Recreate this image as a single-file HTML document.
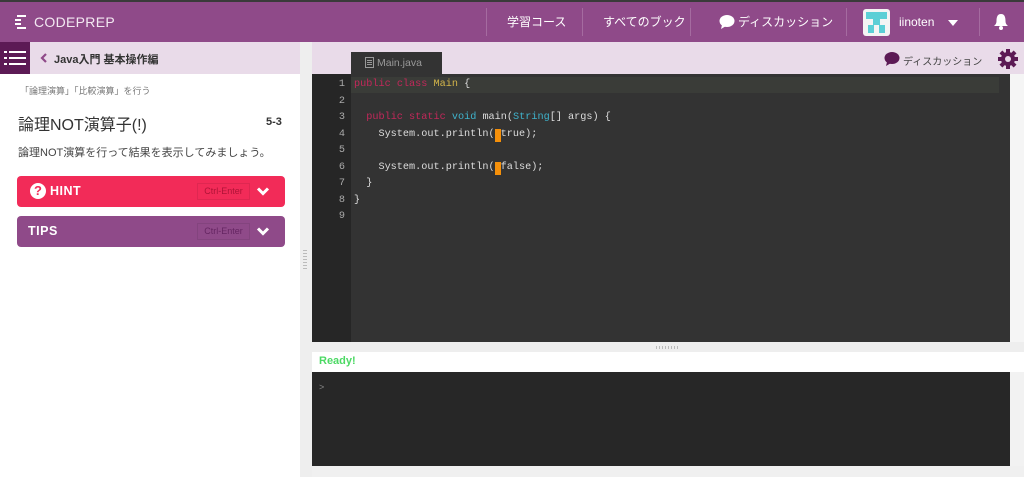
<!DOCTYPE html>
<html><head><meta charset="utf-8"><style>
*{margin:0;padding:0;box-sizing:border-box}
body{width:1024px;height:477px;overflow:hidden;background:#fff;font-family:"Liberation Sans","Noto Sans CJK JP",sans-serif;position:relative}
.abs{position:absolute}
#top{left:0;top:0;width:1024px;height:2px;background:#3a3a3a}
#hdr{left:0;top:2px;width:1024px;height:40px;background:#8f4a89;color:#fff}
.nav{position:absolute;top:0;height:40px;line-height:40px;font-size:12px;color:#fff}
.sep{position:absolute;top:6px;width:1px;height:28px;background:#a56ba0}
#sub{left:0;top:42px;width:1024px;height:32px;background:#e9dbe9}
.code{font-family:"Liberation Mono",monospace;font-size:10.2px;color:#ddd;white-space:pre;line-height:16.5px}
.code div{height:16.5px}
.k{color:#c2285a}.t{color:#3fb3cc}.c{color:#d3b54a}
.cur{display:inline-block;width:6px;height:13px;background:#f5900a;vertical-align:top;margin-top:2px}
</style></head><body>
<div class="abs" id="top"></div>
<div class="abs" id="hdr">
 <svg class="abs" style="left:15px;top:12px" width="12" height="16"><rect x="2" y="1" width="9" height="2" fill="#fff"/><rect x="0" y="5" width="6" height="2" fill="#fff"/><rect x="0" y="9" width="6" height="2" fill="#fff"/><rect x="2" y="13" width="9" height="2" fill="#fff"/></svg>
 <div class="nav" style="left:34px;font-size:14px;letter-spacing:0.3px;color:#f3e9f2">CODEPREP</div>
 <div class="sep" style="left:486px"></div>
 <div class="nav" style="left:507px">学習コース</div>
 <div class="sep" style="left:582px"></div>
 <div class="nav" style="left:603px">すべてのブック</div>
 <div class="sep" style="left:690px"></div>
 <svg class="abs" style="left:719px;top:12px" width="16" height="15"><ellipse cx="8" cy="7" rx="7.5" ry="6" fill="#fff"/><path d="M3 11 L2 15 L7 12Z" fill="#fff"/></svg>
 <div class="nav" style="left:738px">ディスカッション</div>
 <div class="sep" style="left:846px"></div>
 <div class="abs" style="left:863px;top:7px;width:27px;height:27px;background:#f4f4f4;border-radius:3px">
  <div class="abs" style="left:3px;top:3px;width:21px;height:7px;background:#5ccfd6"></div>
  <div class="abs" style="left:10px;top:10px;width:7px;height:6px;background:#5ccfd6"></div>
  <div class="abs" style="left:5px;top:16px;width:6px;height:8px;background:#5ccfd6"></div>
  <div class="abs" style="left:16px;top:16px;width:6px;height:8px;background:#5ccfd6"></div>
 </div>
 <div class="nav" style="left:899px">iinoten</div>
 <svg class="abs" style="left:948px;top:18px" width="10" height="6"><path d="M0 0H10L5 6Z" fill="#fff"/></svg>
 <div class="sep" style="left:979px"></div>
 <svg class="abs" style="left:993px;top:11px" width="16" height="17"><path d="M8 1C4 1 3.5 5 3.5 8 3.5 11 2 12 1 13H15C14 12 12.5 11 12.5 8 12.5 5 12 1 8 1Z" fill="#fff"/><circle cx="8" cy="15" r="2" fill="#fff"/></svg>
</div>
<div class="abs" id="sub"></div>
<div class="abs" style="left:0;top:42px;width:30px;height:32px;background:#5c1a55">
 <svg class="abs" style="left:4px;top:9px" width="22" height="14"><g fill="#fff"><rect x="0" y="0" width="3" height="2"/><rect x="5" y="0" width="17" height="2"/><rect x="0" y="6" width="3" height="2"/><rect x="5" y="6" width="17" height="2"/><rect x="0" y="12" width="3" height="2"/><rect x="5" y="12" width="17" height="2"/></g></svg>
</div>
<svg class="abs" style="left:40px;top:53px" width="7" height="10"><path d="M6 1L2 5L6 9" stroke="#8f4a89" stroke-width="2.2" fill="none"/></svg>
<div class="abs" style="left:54px;top:51px;font-size:11px;font-weight:bold;color:#333">Java入門 基本操作編</div>
<div class="abs" style="left:300px;top:42px;width:12px;height:435px;background:#eeeeee"></div>
<div class="abs" style="left:20px;top:84px;font-size:9px;color:#777">「論理演算」「比較演算」を行う</div>
<div class="abs" style="left:18px;top:111px;font-size:16px;color:#333">論理NOT演算子(!)</div>
<div class="abs" style="left:266px;top:116px;font-size:11px;font-weight:bold;color:#333">5-3</div>
<div class="abs" style="left:18px;top:144px;font-size:11px;color:#444">論理NOT演算を行って結果を表示してみましょう。</div>
<div class="abs" style="left:17px;top:176px;width:268px;height:31px;background:#f22b58;border-radius:4px">
 <div class="abs" style="left:13px;top:7px;width:16px;height:16px;border-radius:50%;background:#fff;color:#f22b58;font-weight:bold;font-size:13px;text-align:center;line-height:16px">?</div>
 <div class="abs" style="left:33px;top:8px;color:#fff;font-weight:bold;font-size:12.5px;letter-spacing:.5px">HINT</div>
 <div class="abs" style="left:180px;top:7px;width:53px;height:17px;border:1px solid rgba(0,0,0,.08);color:rgba(120,0,30,.55);font-size:9px;line-height:15px;text-align:center">Ctrl-Enter</div>
 <svg class="abs" style="left:239px;top:11px" width="14" height="9"><path d="M2 1.5L7 6.5L12 1.5" stroke="#fff" stroke-width="3" fill="none"/></svg>
</div>
<div class="abs" style="left:17px;top:216px;width:268px;height:31px;background:#8f4a89;border-radius:4px">
 <div class="abs" style="left:11px;top:8px;color:#fff;font-weight:bold;font-size:12.5px;letter-spacing:.5px">TIPS</div>
 <div class="abs" style="left:180px;top:7px;width:53px;height:17px;border:1px solid rgba(0,0,0,.08);color:rgba(60,0,60,.5);font-size:9px;line-height:15px;text-align:center">Ctrl-Enter</div>
 <svg class="abs" style="left:239px;top:11px" width="14" height="9"><path d="M2 1.5L7 6.5L12 1.5" stroke="#fff" stroke-width="3" fill="none"/></svg>
</div>
<div class="abs" style="left:351px;top:52px;width:91px;height:22px;background:#333"></div>
<svg class="abs" style="left:365px;top:57px" width="9" height="11"><rect x="0.5" y="0.5" width="8" height="10" fill="none" stroke="#999"/><path d="M2 3.5H7M2 5.5H7M2 7.5H7" stroke="#999"/></svg>
<div class="abs" style="left:377px;top:57px;font-size:10.5px;color:#999">Main.java</div>
<svg class="abs" style="left:884px;top:51px" width="16" height="15"><ellipse cx="8" cy="7" rx="7.5" ry="6" fill="#5c1a55"/><path d="M3 11 L2 15 L7 12Z" fill="#5c1a55"/></svg>
<div class="abs" style="left:903px;top:53px;font-size:10px;color:#444">ディスカッション</div>
<svg class="abs" style="left:998px;top:49px" width="20" height="20" viewBox="0 0 20 20"><g fill="#5c1a55"><circle cx="10" cy="10" r="7"/><g><rect x="8" y="0" width="4" height="20"/><rect x="0" y="8" width="20" height="4"/><rect x="8" y="0" width="4" height="20" transform="rotate(45 10 10)"/><rect x="8" y="0" width="4" height="20" transform="rotate(-45 10 10)"/></g></g><circle cx="10" cy="10" r="3" fill="#e9dbe9"/></svg>
<div class="abs" style="left:312px;top:74px;width:698px;height:268px;background:#333"></div>
<div class="abs" style="left:312px;top:74px;width:39px;height:268px;background:#262626"></div>
<div class="abs" style="left:351px;top:77px;width:648px;height:16px;background:#3a3c38"></div>
<div class="abs" style="left:1010px;top:74px;width:14px;height:270px;background:#f5f5f5"></div>
<div class="abs code" style="left:312px;top:77px;width:33px;text-align:right;color:#aaa"><div>1</div><div>2</div><div>3</div><div>4</div><div>5</div><div>6</div><div>7</div><div>8</div><div>9</div></div>
<div class="abs code" style="left:354px;top:77px"><div><span class="k">public</span> <span class="k">class</span> <span class="c">Main</span> {</div><div></div><div>  <span class="k">public</span> <span class="k">static</span> <span class="t">void</span> main(<span class="t">String</span>[] args) {</div><div>    System.out.println(<span class="cur"></span>true);</div><div></div><div>    System.out.println(<span class="cur"></span>false);</div><div>  }</div><div>}</div></div>
<div class="abs" style="left:312px;top:342px;width:712px;height:10px;background:#eee"></div>
<div class="abs" style="left:656px;top:346px;width:24px;height:3px;background:repeating-linear-gradient(90deg,#bbb 0 1px,transparent 1px 3px)"></div>
<div class="abs" style="left:312px;top:352px;width:712px;height:20px;background:#fff"></div>
<div class="abs" style="left:319px;top:355px;font-size:11px;font-weight:bold;color:#4cd964">Ready!</div>
<div class="abs" style="left:312px;top:372px;width:698px;height:94px;background:#272727"></div>
<div class="abs" style="left:319px;top:382px;font-size:9px;color:#888">&gt;</div>
<div class="abs" style="left:1010px;top:372px;width:14px;height:105px;background:#f2f2f2"></div>
<div class="abs" style="left:312px;top:466px;width:712px;height:11px;background:#f0f0f0"></div>
<div class="abs" style="left:303px;top:250px;width:4px;height:20px;background:repeating-linear-gradient(180deg,#bbb 0 1px,transparent 1px 3px)"></div>
</body></html>
